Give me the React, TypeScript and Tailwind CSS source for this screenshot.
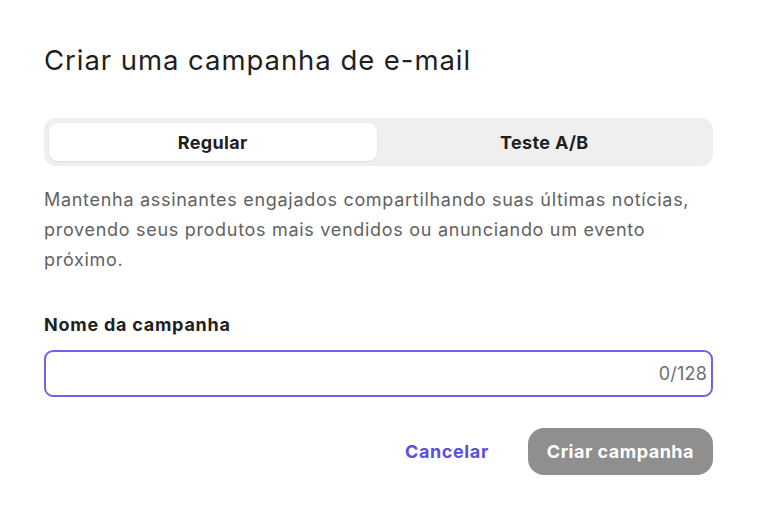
import React, { useState } from 'react';

const font = { fontFamily: 'Inter, "Noto Sans", sans-serif' };

export default function App() {
    const [tab, setTab] = useState<'regular' | 'ab'>('regular');
    const [name, setName] = useState('');

    return (
        <div className="min-h-[532px] w-full bg-white" style={font}>
            <div className="ml-[44px] w-[669px] pt-[43px]">
                {/* Title */}
                <h1 className="text-[27.5px] leading-[34px] font-normal text-[#1f1f1f] tracking-[0.95px]">
                    Criar uma campanha de e-mail
                </h1>

                {/* Tabs */}
                <div className="mt-[41px] h-[48px] rounded-[12px] bg-[#efefef] p-[5px] grid grid-cols-2 gap-[4px]">
                    <button
                        onClick={() => setTab('regular')}
                        className={
                            tab === 'regular'
                                ? 'rounded-[9px] bg-white shadow-[0_1px_2px_rgba(0,0,0,0.08)] text-[18px] tracking-[0.35px] font-bold text-[#1f1f1f]'
                                : 'rounded-[9px] text-[18px] tracking-[0.35px] font-bold text-[#1f1f1f]'
                        }
                    >
                        Regular
                    </button>
                    <button
                        onClick={() => setTab('ab')}
                        className={
                            tab === 'ab'
                                ? 'rounded-[9px] bg-white shadow-[0_1px_2px_rgba(0,0,0,0.08)] text-[18px] tracking-[0.35px] font-bold text-[#1f1f1f]'
                                : 'rounded-[9px] text-[18px] tracking-[0.35px] font-bold text-[#1f1f1f]'
                        }
                    >
                        Teste A/B
                    </button>
                </div>

                {/* Description */}
                <p className="mt-[19px] text-[18px] leading-[30px] tracking-[0.7px] text-[#626262] pr-[20px]">
                    Mantenha assinantes engajados compartilhando suas últimas notícias, provendo seus produtos mais vendidos ou anunciando um evento próximo.
                </p>

                {/* Field */}
                <label className="block mt-[38px] text-[18px] leading-[24px] tracking-[0.75px] font-bold text-[#1f1f1f]">
                    Nome da campanha
                </label>
                <div className="mt-[13px] h-[47px] rounded-[9px] border-2 border-[#6f63e6] flex items-center pl-[12px] pr-[4px]">
                    <input
                        value={name}
                        onChange={(e) => setName(e.target.value.slice(0, 128))}
                        className="flex-1 outline-none bg-transparent text-[18px] text-[#1f1f1f]"
                    />
                    <span className="text-[18px] tracking-[0.2px] text-[#6f6f6f]">{name.length}/128</span>
                </div>

                {/* Actions */}
                <div className="mt-[31px] flex justify-end items-center gap-[39px]">
                    <button className="text-[18px] tracking-[0.6px] font-bold text-[#5b4fe0]">Cancelar</button>
                    <button className="h-[47px] px-[19px] rounded-[16px] bg-[#8f8f8f] text-white text-[18px] tracking-[0.5px] font-bold">
                        Criar campanha
                    </button>
                </div>
            </div>
        </div>
    );
}
